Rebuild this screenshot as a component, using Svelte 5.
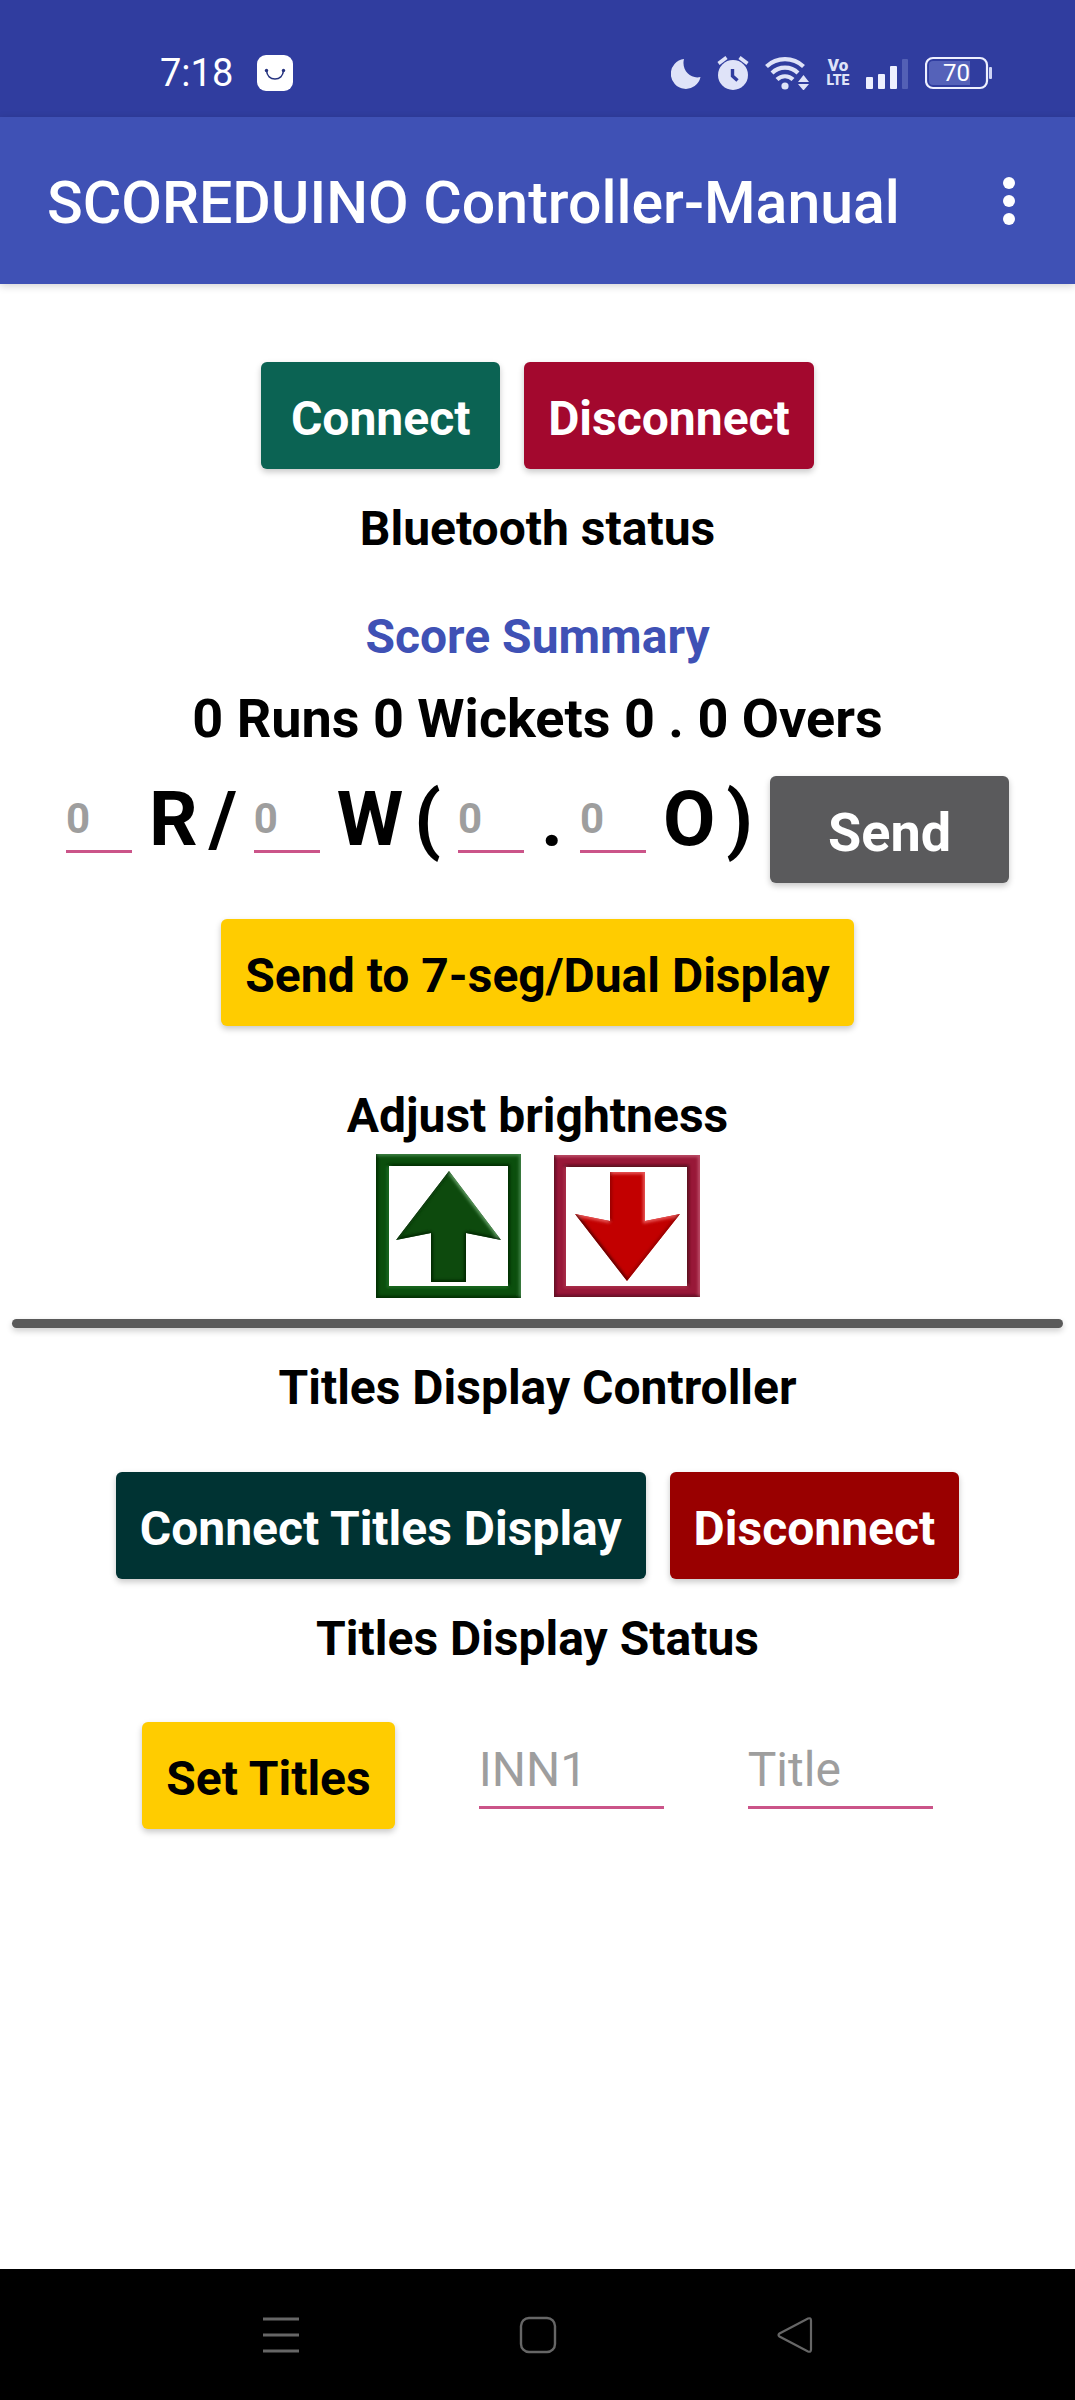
<script>
  let runs = $state('');
  let wickets = $state('');
  let overs = $state('');
  let balls = $state('');
  let innings = $state('');
  let title = $state('');
</script>

<div class="screen">
  <div class="status-bar">
    <div class="status-left">
      <span class="clock">7:18</span>
      <svg width="36" height="36" viewBox="0 0 36 36" aria-hidden="true">
        <rect width="36" height="36" rx="9" fill="#fff" />
        <path d="M9.500 15.500C10 21 13.500 24 18 24s8-3 8.500-8.500" fill="none" stroke="#26337f" stroke-width="1.600" />
        <circle cx="9.500" cy="15.500" r="1.700" fill="#26337f" />
        <circle cx="26.500" cy="15.500" r="1.700" fill="#26337f" />
      </svg>
    </div>
    <div class="status-right">
      <svg width="30" height="34" viewBox="0 0 30 34" aria-hidden="true">
        <path d="M13 3A15 15 0 1 0 29.500 21C20 23.500 10 14.500 13 3z" fill="#dfe3f8" />
      </svg>
      <svg width="32" height="34" viewBox="0 0 32 34" aria-hidden="true">
        <circle cx="16" cy="19" r="15" fill="#dfe3f8" />
        <path d="M1.500 7.500l8-6M30.500 7.500l-8-6" stroke="#dfe3f8" stroke-width="3.600" />
        <path d="M15.500 13v7l5 4.500" fill="none" stroke="#303d9f" stroke-width="3.400" />
      </svg>
      <svg width="45" height="34" viewBox="0 0 45 34" aria-hidden="true">
        <g fill="none" stroke="#dfe3f8" stroke-width="4.200">
          <path d="M1.500 10.500a27 27 0 0 1 37 0" />
          <path d="M7 17a18.500 18.500 0 0 1 26 0" />
          <path d="M12 23.500a11.500 11.500 0 0 1 16 0" />
        </g>
        <circle cx="20" cy="30" r="3.600" fill="#dfe3f8" />
        <path d="M33 26l5.500-7 5.500 7zM33 28h11l-5.500 6.500z" fill="#dfe3f8" />
      </svg>
      <span class="volte"><span class="vo">Vo</span><span>LTE</span></span>
      <svg width="43" height="34" viewBox="0 0 43 34" aria-hidden="true">
        <rect x="0" y="21" width="7" height="12" rx="1" fill="#eef0ff" />
        <rect x="12" y="18" width="7" height="15" rx="1" fill="#eef0ff" />
        <rect x="24" y="10" width="7" height="23" rx="1" fill="#eef0ff" />
        <rect x="36" y="3" width="6" height="30" rx="1" fill="#5360b5" />
      </svg>
      <span class="battery">
        <svg width="68" height="34" viewBox="0 0 68 34" aria-hidden="true">
          <rect x="1" y="2" width="61" height="30" rx="7" fill="none" stroke="#eef0ff" stroke-width="2.200" />
          <path d="M8 5h37v24H8a4 4 0 0 1-4-4V9a4 4 0 0 1 4-4z" fill="#5562b9" />
          <rect x="64" y="11" width="3" height="12" rx="1" fill="#cfd4f5" />
        </svg>
        <span class="level">70</span>
      </span>
    </div>
  </div>

  <header class="app-bar">
    <h1>SCOREDUINO Controller-Manual</h1>
    <button class="menu" aria-label="More options">
      <svg width="12" height="48" viewBox="0 0 12 48" fill="#fff">
        <circle cx="6" cy="6" r="6" /><circle cx="6" cy="24" r="6" /><circle cx="6" cy="42" r="6" />
      </svg>
    </button>
  </header>

  <main>
    <div class="row buttons">
      <button class="btn connect">Connect</button>
      <button class="btn disconnect">Disconnect</button>
    </div>
    <p class="label bluetooth">Bluetooth status</p>
    <h2 class="label summary">Score Summary</h2>
    <p class="score">0 Runs 0 Wickets 0 . 0 Overs</p>

    <form class="row entry" onsubmit={(e) => e.preventDefault()}>
      <input class="small" aria-label="Runs" placeholder="0" bind:value={runs} />
      <span class="marks"><span>R</span><span>/</span></span>
      <input class="small" aria-label="Wickets" placeholder="0" bind:value={wickets} />
      <span class="marks"><span>W</span><span>(</span></span>
      <input class="small" aria-label="Overs" placeholder="0" bind:value={overs} />
      <span class="marks"><span>.</span></span>
      <input class="small" aria-label="Balls" placeholder="0" bind:value={balls} />
      <span class="marks"><span>O</span><span>)</span></span>
      <button class="btn send">Send</button>
    </form>

    <button class="btn yellow dual">Send to 7-seg/Dual Display</button>

    <h2 class="label brightness">Adjust brightness</h2>
    <div class="row arrows">
      <button class="arrow" aria-label="Increase brightness">
        <svg width="145" height="144" viewBox="0 0 145 144">
          <defs>
            <filter id="soft" x="-20%" y="-20%" width="140%" height="140%"><feGaussianBlur stdDeviation="1.400" /></filter>
            <clipPath id="upFrame"><path clip-rule="evenodd" d="M0 0h145v144H0zM13 12v120h119V12z" /></clipPath>
            <clipPath id="upArrow"><path d="M73 17l52 69-35-7v49H55V79l-35 7z" /></clipPath>
          </defs>
          <g clip-path="url(#upFrame)">
            <rect width="145" height="144" fill="#0b4f0d" />
            <g fill="none" stroke-width="4" filter="url(#soft)">
              <path d="M0 0h145v144" stroke="#3f8246" />
              <path d="M0 0v144h145" stroke="#012b03" />
              <path d="M13 132V12h119v120" stroke="#022c03" />
              <path d="M13 12v120h119" stroke="#1c6a20" />
            </g>
          </g>
          <g clip-path="url(#upArrow)">
            <rect width="145" height="144" fill="#0d4a0d" />
            <g fill="none" stroke-width="4" filter="url(#soft)">
              <path d="M73 17l52 69" stroke="#5f9a62" />
              <path d="M90 79v49H55V79M20 86l35-7M90 79l35 7" stroke="#022603" />
              <path d="M20 86l53-69" stroke="#0a3a0b" />
            </g>
          </g>
        </svg>
      </button>
      <button class="arrow" aria-label="Decrease brightness">
        <svg width="146" height="144" viewBox="0 0 146 144">
          <defs>
            <clipPath id="downFrame"><path clip-rule="evenodd" d="M0 1h146v142H0zM12 13v119h121V13z" /></clipPath>
            <clipPath id="downArrow"><path d="M56 18h35v49l35-7-53 67-52-67 35 7z" /></clipPath>
          </defs>
          <g clip-path="url(#downFrame)">
            <rect width="146" height="144" fill="#981838" />
            <g fill="none" stroke-width="4" filter="url(#soft)">
              <path d="M0 1h146v142" stroke="#bd5069" />
              <path d="M0 1v142h146" stroke="#5e0c20" />
              <path d="M12 132V13h121v119" stroke="#520a1c" />
              <path d="M12 13v119h121" stroke="#a92e4a" />
            </g>
          </g>
          <g clip-path="url(#downArrow)">
            <rect width="146" height="144" fill="#c20000" />
            <g fill="none" stroke-width="4" filter="url(#soft)">
              <path d="M56 18h35v49l35-7M21 60l35 7" stroke="#e85a5a" />
              <path d="M56 67V18M126 60l-53 67" stroke="#960000" />
              <path d="M21 60l52 67" stroke="#5c0000" />
            </g>
          </g>
        </svg>
      </button>
    </div>

    <hr />

    <h2 class="label controller">Titles Display Controller</h2>
    <div class="row buttons titles">
      <button class="btn titles-connect">Connect Titles Display</button>
      <button class="btn titles-disconnect">Disconnect</button>
    </div>
    <p class="label titles-status">Titles Display Status</p>
    <form class="row fields" onsubmit={(e) => e.preventDefault()}>
      <button class="btn yellow">Set Titles</button>
      <input class="wide" aria-label="Innings" placeholder="INN1" bind:value={innings} />
      <input class="wide" aria-label="Title" placeholder="Title" bind:value={title} />
    </form>
  </main>

  <nav class="nav-bar" aria-label="System navigation">
    <button aria-label="Recent apps">
      <svg width="38" height="38" viewBox="0 0 38 38"><path d="M1 3h36M1 19h36M1 35h36" stroke="#666" stroke-width="3" /></svg>
    </button>
    <button aria-label="Home">
      <svg width="38" height="38" viewBox="0 0 38 38"><rect x="2" y="2" width="34" height="34" rx="8" fill="none" stroke="#666" stroke-width="2.400" /></svg>
    </button>
    <button aria-label="Back">
      <svg width="38" height="38" viewBox="0 0 38 38"><path d="M3.500 17.500L32 2.500q3-1 3 2v29q0 3-3 2L3.500 20.500q-2-1.500 0-3z" fill="none" stroke="#666" stroke-width="2.200" /></svg>
    </button>
  </nav>
</div>

<style>
  :global(body) {
    margin: 0;
    background: #fff;
  }
  .screen {
    min-height: 100vh;
    display: flex;
    flex-direction: column;
    font-family: Roboto, 'Liberation Sans', sans-serif;
    color: #000;
  }
  h1, h2, p {
    margin: 0;
  }
  svg {
    display: block;
  }
  button {
    border: 0;
    padding: 0;
    background: none;
    font-family: inherit;
    cursor: pointer;
  }
  .status-bar {
    height: 117px;
    padding: 0 82px 0 160px;
    box-sizing: border-box;
    background: #303d9f;
    color: #fff;
    display: flex;
    align-items: center;
    justify-content: space-between;
  }
  .status-left, .status-right {
    display: flex;
    align-items: center;
    padding-top: 28px;
  }
  .status-left {
    gap: 24px;
  }
  .status-right {
    gap: 16px;
  }
  .clock {
    font-size: 38px;
    line-height: 44px;
  }
  .volte {
    display: flex;
    flex-direction: column;
    align-items: center;
    width: 24px;
    color: #dfe3f8;
    font-size: 14px;
    line-height: 15px;
    font-weight: 900;
  }
  .vo {
    font-size: 17px;
  }
  .battery {
    position: relative;
  }
  .level {
    position: absolute;
    inset: 0 5px 0 0;
    text-align: center;
    font-size: 24px;
    line-height: 34px;
  }
  .app-bar {
    height: 167px;
    padding: 0 60px 0 47px;
    box-sizing: border-box;
    background: #3f51b5;
    color: #fff;
    display: flex;
    align-items: center;
    justify-content: space-between;
    box-shadow: 0 2px 8px rgba(0, 0, 0, 0.18);
  }
  h1 {
    font-size: 59px;
    line-height: 72px;
    font-weight: 500;
    padding-top: 4px;
  }
  main {
    flex: 1;
    display: flex;
    flex-direction: column;
    align-items: center;
    padding-top: 78px;
  }
  .row {
    display: flex;
    justify-content: center;
    align-items: flex-start;
  }
  .buttons {
    gap: 24px;
  }
  .btn {
    height: 107px;
    padding: 6px 24px 0;
    border-radius: 6px;
    color: #fff;
    font-size: 48px;
    line-height: 56px;
    font-weight: 700;
    white-space: nowrap;
    box-shadow: 0 3px 6px rgba(0, 0, 0, 0.22);
  }
  .connect {
    min-width: 239px;
    background: #0b6353;
  }
  .disconnect {
    background: #a3082e;
  }
  .send {
    width: 239px;
    background: #5a5a5c;
    font-size: 54px;
    line-height: 64px;
  }
  .yellow {
    background: #ffcc00;
    color: #000;
  }
  .titles-connect {
    background: #003333;
  }
  .titles-disconnect {
    background: #990000;
  }
  .label {
    font-size: 48px;
    line-height: 56px;
    font-weight: 700;
  }
  .bluetooth {
    margin-top: 32px;
  }
  .summary {
    margin-top: 52px;
    color: #3f51b5;
  }
  .score {
    margin-top: 22px;
    font-size: 54px;
    line-height: 64px;
    font-weight: 700;
  }
  .entry {
    gap: 17px;
    margin-top: 25px;
  }
  .marks {
    display: flex;
    gap: 11px;
    font-size: 76px;
    line-height: 86px;
    font-weight: 700;
  }
  input {
    box-sizing: border-box;
    border: 0;
    border-bottom: 3px solid #cb5489;
    outline: 0;
    background: none;
    font-family: inherit;
    color: #000;
  }
  input::placeholder {
    color: #9e9e9e;
    opacity: 1;
  }
  .small {
    width: 66px;
    height: 77px;
    padding: 10px 0 0;
    font-size: 42px;
    font-weight: 700;
  }
  .wide {
    width: 185px;
    height: 87px;
    padding: 10px 0 0;
    font-size: 48px;
  }
  .dual {
    margin-top: 36px;
  }
  .brightness {
    margin-top: 62px;
  }
  .arrows {
    gap: 33px;
    margin-top: 10px;
  }
  hr {
    align-self: stretch;
    height: 9px;
    margin: 21px 12px 0;
    border: 0;
    border-radius: 5px;
    background: #5a5a5a;
    box-shadow: 0 3px 6px rgba(0, 0, 0, 0.2);
  }
  .controller {
    margin-top: 32px;
  }
  .titles {
    margin-top: 56px;
  }
  .titles-status {
    margin-top: 32px;
  }
  .fields {
    gap: 84px;
    margin-top: 55px;
  }
  .nav-bar {
    height: 131px;
    box-sizing: border-box;
    background: #000;
    display: flex;
    align-items: center;
    justify-content: center;
    gap: 219px;
  }
</style>
